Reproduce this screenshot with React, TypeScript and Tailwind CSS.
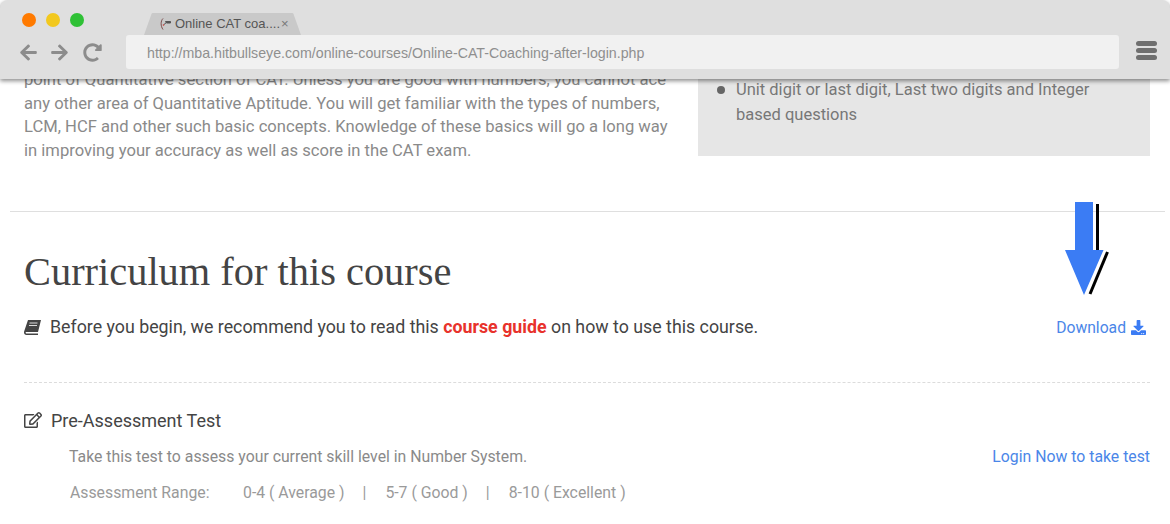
import { FaArrowLeft, FaArrowRight, FaDownload, FaRedoAlt, FaRegEdit } from 'react-icons/fa'

function BrowserBar() {
  return (
    <div className="relative z-10 h-[79px] rounded-t-[8px] bg-[#dfdfdf] shadow-[0_2px_4px_rgba(0,0,0,0.45)] font-['Liberation_Sans',sans-serif]">
      <div className="flex h-[35px] items-end">
        <div className="mb-[8px] ml-[22px] flex gap-[10px]">
          <span className="h-[14px] w-[14px] rounded-full bg-[#ff7a00]" />
          <span className="h-[14px] w-[14px] rounded-full bg-[#f2c81e]" />
          <span className="h-[14px] w-[14px] rounded-full bg-[#2fc136]" />
        </div>
        <div className="ml-[60px] flex h-[22px] w-[157px] items-center rounded-t-[9px] bg-[#c9c9c9] pl-[15px] text-[13px] text-[#555] [clip-path:polygon(0_100%,5%_0,95%_0,100%_100%)]">
          <svg viewBox="0 0 14 14" className="mr-[2px] h-[14px] w-[14px]">
            <path d="M4 1.500C1.500 4 1.500 9 4 12.500" stroke="#7a4a4a" strokeWidth="1" fill="none" />
            <path d="M5 7.500l3-2.500M6.500 4.500h5v1.500h-4z" stroke="#555" strokeWidth="1" fill="#555" />
            <circle cx="4.500" cy="8" r="0.800" fill="#c8322c" />
          </svg>
          Online CAT coa....<span className="ml-[1px] text-[#777]">×</span>
        </div>
      </div>
      <div className="flex items-center">
        <div className="ml-[19px] flex w-[107px] items-center text-[#8c8c8c]">
          <FaArrowLeft className="h-[19px] w-[19px]" />
          <FaArrowRight className="ml-[12px] h-[19px] w-[19px]" />
          <FaRedoAlt className="ml-[14px] h-[19px] w-[19px]" />
        </div>
        <div className="flex h-[34px] w-[993px] items-center rounded-[3px] bg-[#f1f1f1] pt-[3px] pl-[21px] text-[14.200px] text-[#8f8f8f]">
          http://mba.hitbullseye.com/online-courses/Online-CAT-Coaching-after-login.php
        </div>
        <div className="ml-[17px] -mt-[3px] flex w-[21px] flex-col gap-[2px]">
          <span className="h-[5px] rounded-full bg-[#6f6f6f]" />
          <span className="h-[5px] rounded-full bg-[#6f6f6f]" />
          <span className="h-[5px] rounded-full bg-[#6f6f6f]" />
        </div>
      </div>
    </div>
  )
}

function BlueArrow() {
  return (
    <svg viewBox="0 0 46 95" className="h-[95px] w-[46px]">
      <path d="M31 2h3v48h-3z" fill="#000" />
      <path d="M42.500 50 L25 92" stroke="#000" strokeWidth="3" fill="none" />
      <path d="M10 0h18v48h10.500L19 93 0 48h10z" fill="#3b7cf4" />
    </svg>
  )
}

function BookIcon() {
  return (
    <svg viewBox="0 0 17 15" className="mr-[9px] h-[15px] w-[17px] text-[#444]">
      <path d="M4 0h13l-3 12H2.500c-.8 0-1 .6-.8 1s.5.6 1 .6H14v1.400H2.500C1 15 0 14 0 12.500c0-.4 0-.8.200-1.200z" fill="currentColor" />
      <path d="M5.500 3h8M5 5.500h8" stroke="#dcdcdc" strokeWidth="1" />
    </svg>
  )
}

export default function App() {
  return (
    <div className="h-[524px] w-[1170px] overflow-hidden bg-white font-['Roboto',sans-serif]">
      <BrowserBar />

      <div className="-mt-[11px] flex justify-between pr-[20px] pl-[24px] leading-[23.700px]">
        <p className="w-[650px] text-[16.600px] text-[#8a8a8a]">
          point of Quantitative section of CAT. Unless you are good with numbers, you cannot ace
          <br />
          any other area of Quantitative Aptitude. You will get familiar with the types of numbers,
          <br />
          LCM, HCF and other such basic concepts. Knowledge of these basics will go a long way
          <br />
          in improving your accuracy as well as score in the CAT exam.
        </p>
        <div className="-mt-[1px] h-[89px] w-[452px] bg-[#e6e6e6] pt-[10px] pl-[38px] pr-[40px] text-[16.500px] leading-[25px] text-[#777]">
          <div className="relative">
            <span className="absolute top-[9px] -left-[19px] h-[8px] w-[8px] rounded-full bg-[#666]" />
            Unit digit or last digit, Last two digits and Integer based questions
          </div>
        </div>
      </div>

      <div className="mx-[10px] mt-[48px] mr-[5px] border-t border-[#dfdfdf]" />

      <div className="mr-[20px] ml-[24px] mt-[35px]">
        <h2 className="font-['Liberation_Serif',serif] text-[40.400px] leading-[50px] font-normal text-[#444]">
          Curriculum for this course
        </h2>
        <div className="relative mt-[19px] flex h-[24px] items-center justify-between text-[17.800px] text-[#444]">
          <div className="flex items-center">
            <BookIcon />
            <span>
              Before you begin, we recommend you to read this{' '}
              <span className="font-bold text-[#e8322c]">course guide</span> on how to use this course.
            </span>
          </div>
          <div className="mr-[4px] flex items-center text-[15.700px] text-[#4a86e8]">
            Download
            <FaDownload className="ml-[5px] h-[15px] w-[15px] text-[#3b7cf4]" />
          </div>
          <div className="absolute -top-[114px] right-[39px]">
            <BlueArrow />
          </div>
        </div>

        <div className="mt-[42px] border-t border-dashed border-[#dcdcdc]" />

        <div className="mt-[24px] flex items-center text-[18px] text-[#444]">
          <FaRegEdit className="mr-[9px] h-[18px] w-[18px]" />
          Pre-Assessment Test
        </div>
        <div className="mt-[11px] flex items-center justify-between pl-[45px] text-[15.800px] text-[#8a8a8a]">
          <span>Take this test to assess your current skill level in Number System.</span>
          <span className="text-[#4a86e8]">Login Now to take test</span>
        </div>
        <div className="mt-[12px] flex pl-[46px] text-[15.800px] text-[#9a9a9a]">
          <span className="w-[173px]">Assessment Range:</span>
          <span>0-4 ( Average )</span>
          <span className="mr-[19px] ml-[18px]">|</span>
          <span>5-7 ( Good )</span>
          <span className="mr-[19px] ml-[18px]">|</span>
          <span>8-10 ( Excellent )</span>
        </div>
      </div>
    </div>
  )
}
